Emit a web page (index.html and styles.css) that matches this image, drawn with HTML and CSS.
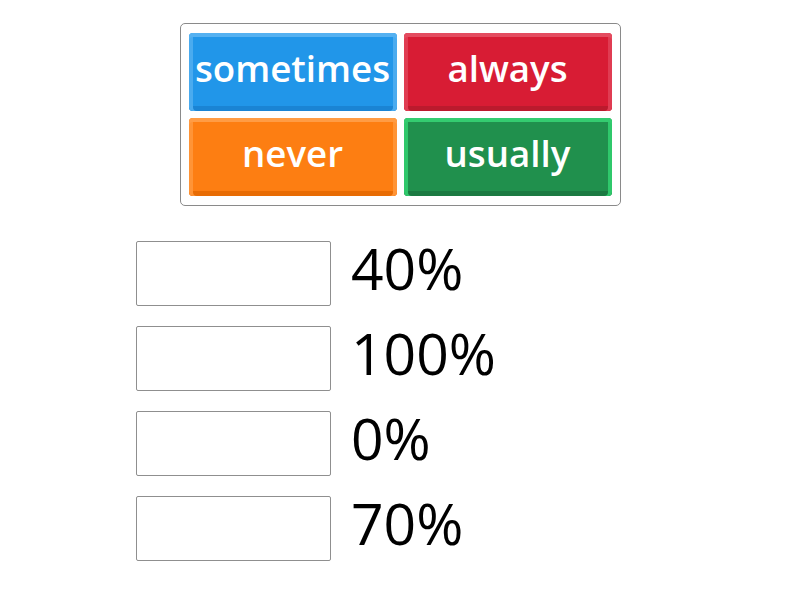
FILE: index.html
```html
<!DOCTYPE html>
<html>
<head>
<meta charset="utf-8">
<link rel="stylesheet" href="styles.css">
</head>
<body>
<div class="page">
  <div class="bank">
    <div class="tile blue">sometimes</div>
    <div class="tile red">always</div>
    <div class="tile orange">never</div>
    <div class="tile green">usually</div>
  </div>
  <div class="rows">
    <div class="row"><div class="slot"></div><div class="label">40%</div></div>
    <div class="row"><div class="slot"></div><div class="label">100%</div></div>
    <div class="row"><div class="slot"></div><div class="label">0%</div></div>
    <div class="row"><div class="slot"></div><div class="label">70%</div></div>
  </div>
</div>
</body>
</html>
```
FILE: styles.css
```css
html, body {
  margin: 0;
  padding: 0;
  background: #ffffff;
}
body {
  width: 800px;
  height: 600px;
  font-family: "Open Sans", "Noto Sans", sans-serif;
}
.page {
  display: flex;
  flex-direction: column;
  align-items: center;
  padding-top: 23px;
}
.bank {
  box-sizing: border-box;
  width: 441px;
  border: 1px solid #8a8a8a;
  border-radius: 5px;
  padding: 9px 8px 9px 8px;
  display: grid;
  grid-template-columns: 208px 208px;
  grid-auto-rows: 78px;
  column-gap: 7px;
  row-gap: 7px;
}
.tile {
  border-radius: 4px;
  color: #ffffff;
  font-size: 36.7px;
  font-weight: 600;
  display: flex;
  align-items: center;
  justify-content: center;
  padding-bottom: 8px;
  box-sizing: border-box;
  white-space: nowrap;
}
.blue {
  background: #2196e9;
  box-shadow: inset 0 4px 0 #55b1f1, inset 4px 0 0 #4aabef, inset -4px 0 0 #4aabef, inset 0 -5px 0 #1a84d4;
}
.red {
  background: #d81c34;
  box-shadow: inset 0 4px 0 #e44c60, inset 4px 0 0 #e03c52, inset -4px 0 0 #e03c52, inset 0 -5px 0 #bb1a2d;
}
.orange {
  background: #fd7e12;
  box-shadow: inset 0 4px 0 #ff9c45, inset 4px 0 0 #ff9436, inset -4px 0 0 #ff9436, inset 0 -5px 0 #e86c04;
}
.green {
  background: #20904d;
  box-shadow: inset 0 4px 0 #34cc70, inset 4px 0 0 #2fc86b, inset -4px 0 0 #2fc86b, inset 0 -5px 0 #1b7a42;
}
.rows {
  align-self: flex-start;
  margin-left: 136px;
  margin-top: 35px;
  display: flex;
  flex-direction: column;
  gap: 20px;
}
.row {
  display: flex;
  align-items: center;
  gap: 20px;
  height: 65px;
}
.slot {
  box-sizing: border-box;
  width: 195px;
  height: 65px;
  border: 1px solid #8f8f8f;
  border-radius: 2px;
  background: #fff;
}
.label {
  font-size: 57px;
  color: #000;
  line-height: 65px;
  margin-top: -11px;
}
```
